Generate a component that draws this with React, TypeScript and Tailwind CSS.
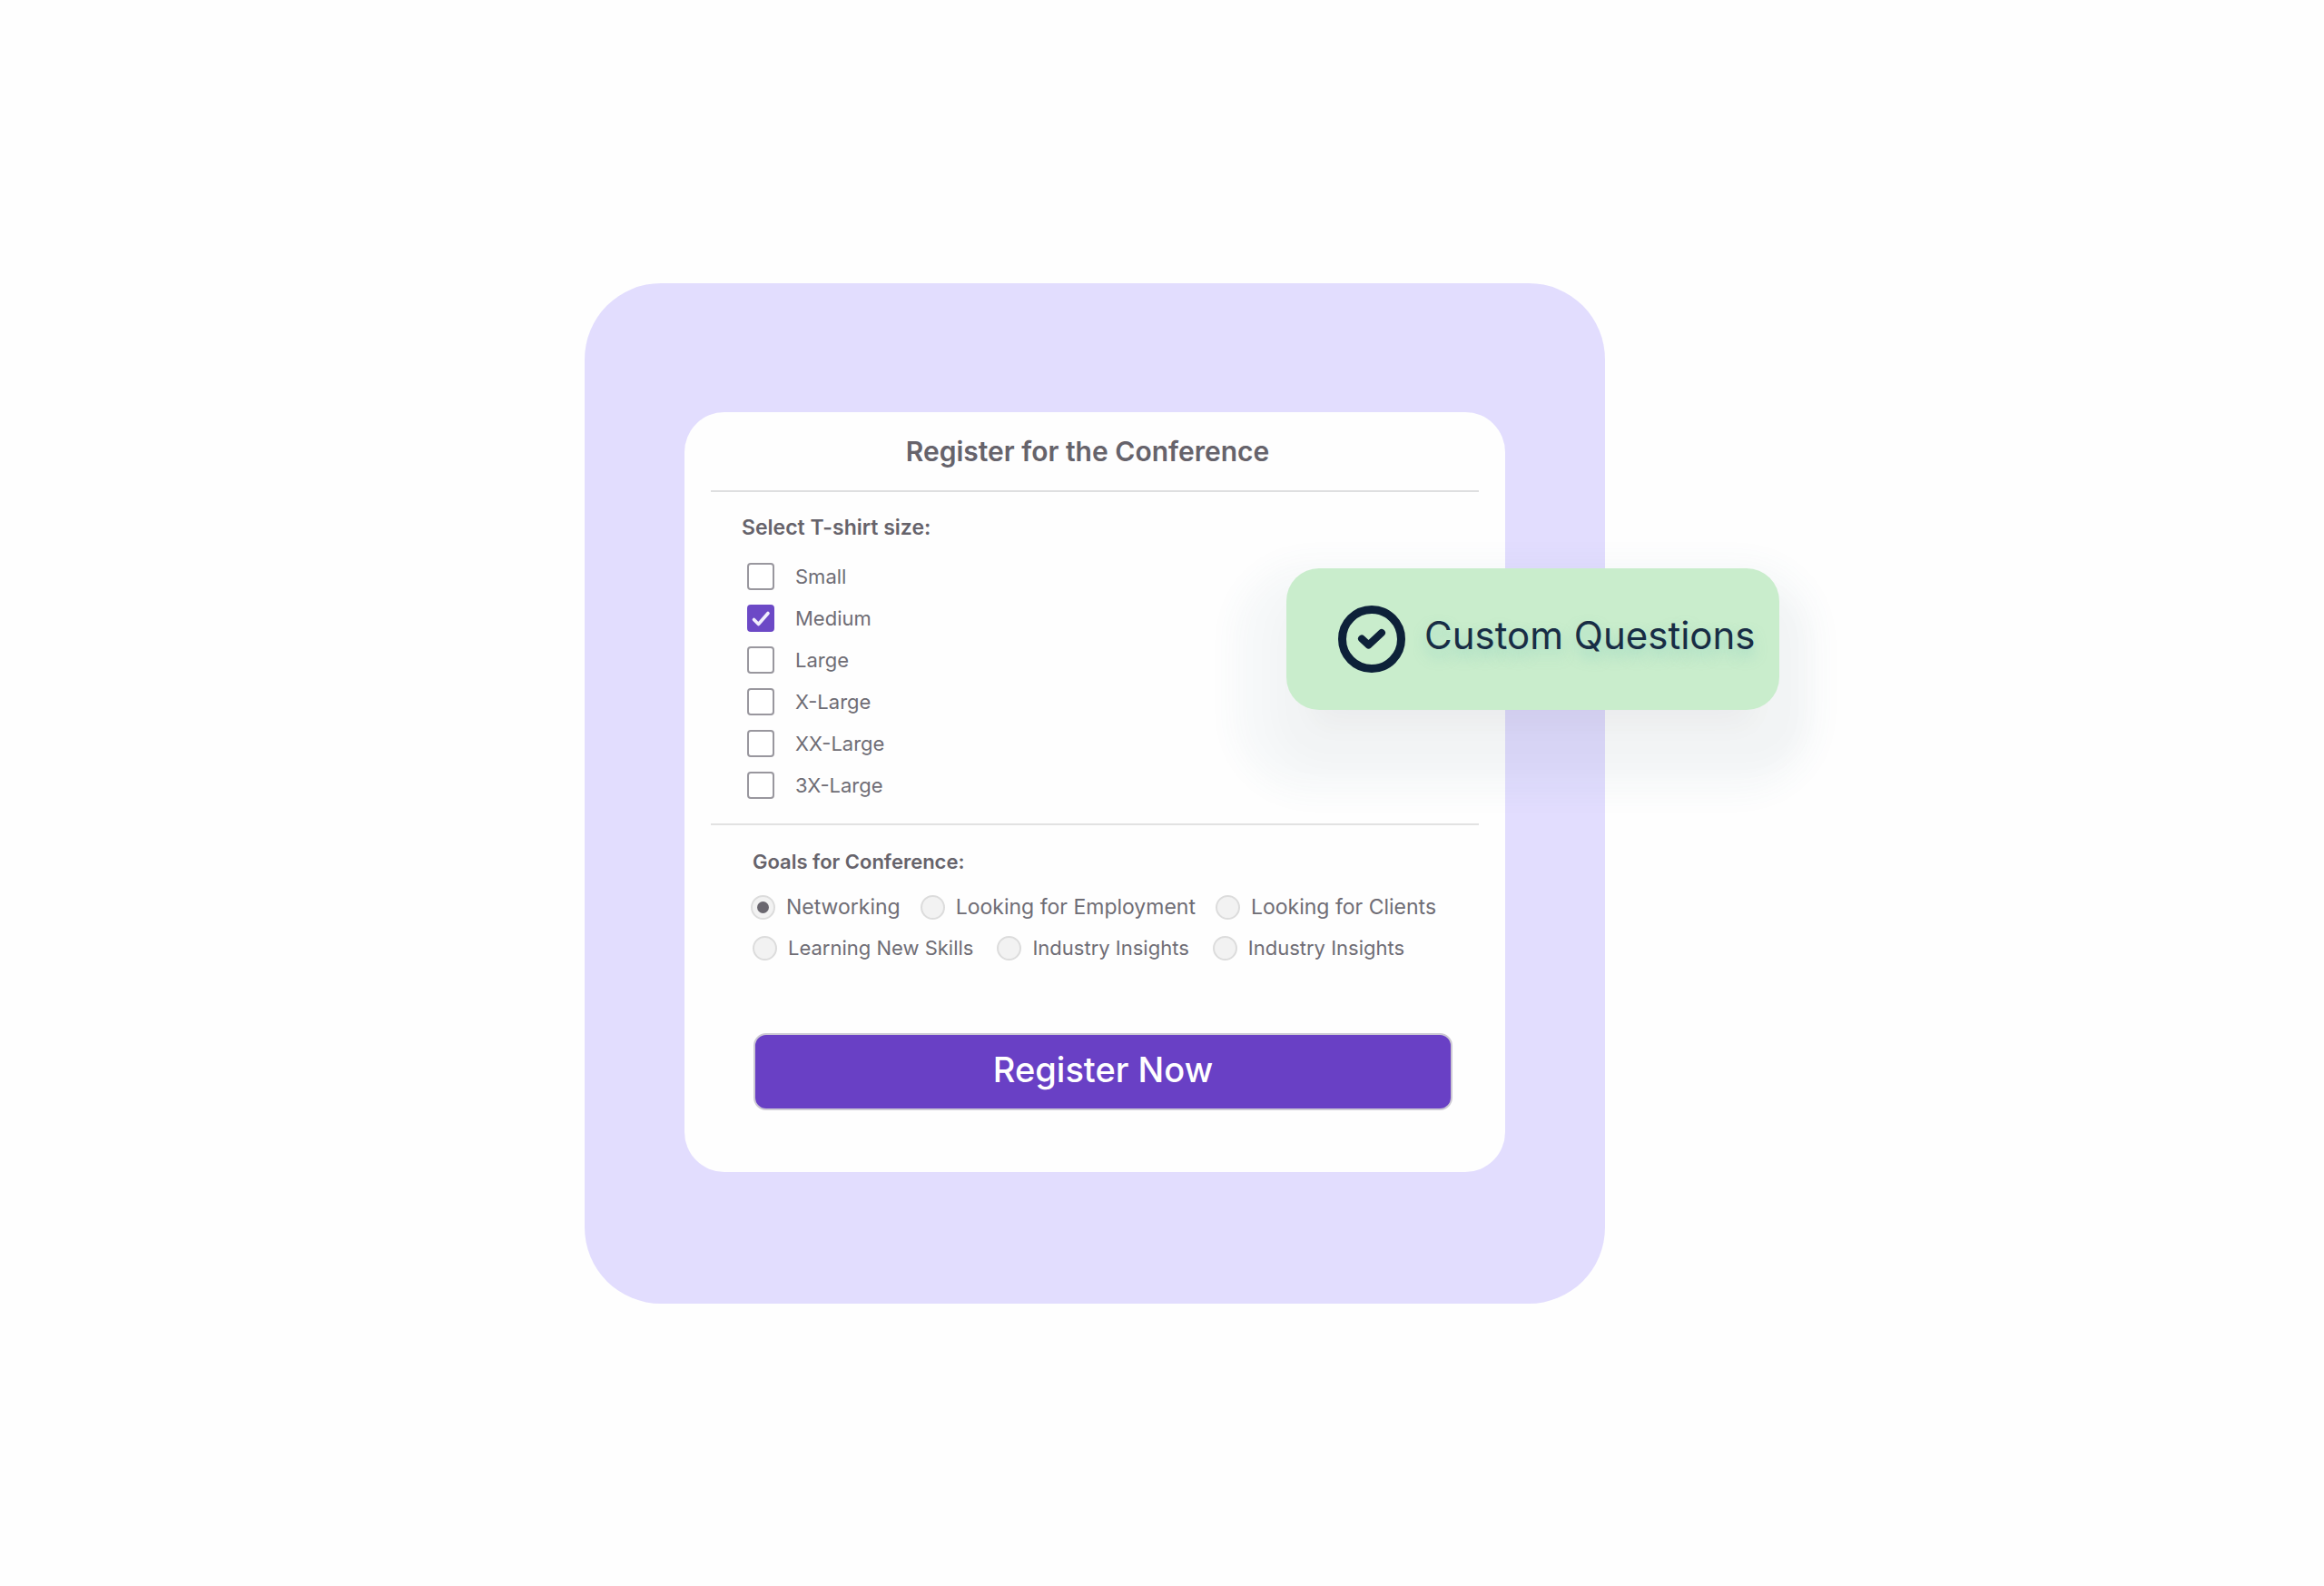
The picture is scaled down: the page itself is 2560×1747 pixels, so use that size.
import { useState } from "react";

const sizes = ["Small", "Medium", "Large", "X-Large", "XX-Large", "3X-Large"];

const primaryGoals = [
  { id: "networking", label: "Networking" },
  { id: "employment", label: "Looking for Employment" },
  { id: "clients", label: "Looking for Clients" },
];

const otherGoals = [
  { id: "skills", label: "Learning New Skills" },
  { id: "insights-1", label: "Industry Insights" },
  { id: "insights-2", label: "Industry Insights" },
];

function SizeOption({ label, checked, onToggle }: { label: string; checked: boolean; onToggle: () => void }) {
  return (
    <label className="flex h-[30px] items-center gap-[23px] text-[22px] leading-[30px] text-[#6f6d75]">
      <span className="relative size-[30px] shrink-0">
        <input
          type="checkbox"
          checked={checked}
          onChange={onToggle}
          className="block size-[30px] appearance-none rounded-[4px] border-2 border-[#99979e] bg-white checked:border-[#6c49c6] checked:bg-[#6c49c6]"
        />
        {checked && (
          <svg viewBox="0 0 30 30" className="pointer-events-none absolute inset-0 size-[30px]" fill="none" aria-hidden="true">
            <path d="M7.5 16.5 12.5 21.5 23 9.5" stroke="#f1effc" strokeWidth="3.6" strokeLinecap="round" strokeLinejoin="round" />
          </svg>
        )}
      </span>
      <span>{label}</span>
    </label>
  );
}

function GoalOption({ id, label, checked, onSelect }: { id: string; label: string; checked: boolean; onSelect: () => void }) {
  return (
    <label className="flex items-center gap-3 leading-[27px] whitespace-nowrap text-[#6f6d75]">
      <span className="relative grid size-[27px] shrink-0 place-items-center">
        <input
          type="radio"
          name="goal"
          value={id}
          checked={checked}
          onChange={onSelect}
          className="block size-[27px] appearance-none rounded-full border-2 border-[#dcdcdc] bg-[#f2f2f2]"
        />
        {checked && <span className="pointer-events-none absolute size-[13px] rounded-full bg-[#6a676f]" />}
      </span>
      <span>{label}</span>
    </label>
  );
}

function Badge() {
  return (
    <div className="absolute top-[314px] -right-[192px] flex h-[156px] w-[543px] items-center rounded-[36px] bg-[#c9edcc] pl-14 shadow-[0_46px_32px_-32px_rgba(40,20,80,0.04),6px_42px_32px_20px_rgba(60,30,20,0.02),-8px_42px_32px_50px_rgba(60,120,150,0.045)]">
      <svg viewBox="0 0 76 76" className="size-[76px] shrink-0" fill="none" stroke="#0d2139" aria-hidden="true">
        <circle cx="38" cy="38" r="32.5" strokeWidth="9" />
        <path d="M27 37.5 34.5 44.5 49 31" strokeWidth="8" strokeLinecap="round" strokeLinejoin="round" />
      </svg>
      <span className="ml-5 pb-2 text-[42px] leading-[48px] whitespace-nowrap text-[#182d45] [text-shadow:0_8px_14px_rgba(120,200,190,0.5)]">
        Custom Questions
      </span>
    </div>
  );
}

export default function App() {
  const [selected, setSelected] = useState<string[]>(["Medium"]);
  const [goal, setGoal] = useState("networking");

  const toggle = (size: string) =>
    setSelected((list) => (list.includes(size) ? list.filter((s) => s !== size) : [...list, size]));

  return (
    <main className="flex min-h-screen items-center justify-center overflow-hidden bg-[#fefefe] pr-[148px] font-['Inter',sans-serif]">
      <div className="relative w-full max-w-[1124px] rounded-[84px] bg-[#e2ddfe] px-[110px] pt-[142px] pb-[145px]">
        <form className="rounded-[44px] bg-[#fefefe] px-[29px] pb-[68px]" onSubmit={(e) => e.preventDefault()}>
          <h1 className="border-b-2 border-[#dedfe0] pt-[23px] pb-[23px] pr-4 text-center text-[30px] leading-[40px] font-semibold text-[#66636b]">
            Register for the Conference
          </h1>

          <fieldset className="border-b-2 border-[#e2e2e2] pb-[27px] pl-[34px]">
            <legend className="float-left w-full pt-[23px] text-[23px] leading-[32px] font-semibold text-[#66636b]">
              Select T-shirt size:
            </legend>
            <div className="clear-both flex flex-col items-start gap-4 pt-[23px] pl-[6px]">
              {sizes.map((size) => (
                <SizeOption key={size} label={size} checked={selected.includes(size)} onToggle={() => toggle(size)} />
              ))}
            </div>
          </fieldset>

          <fieldset className="pl-11">
            <legend className="float-left w-full pt-[24px] pl-[2px] text-[22px] leading-[32px] font-semibold text-[#66636b]">
              Goals for Conference:
            </legend>
            <div className="clear-both flex flex-col gap-[18px] pt-[21px]">
              <div className="flex gap-[22px] text-[23px]">
                {primaryGoals.map((g) => (
                  <GoalOption key={g.id} {...g} checked={goal === g.id} onSelect={() => setGoal(g.id)} />
                ))}
              </div>
              <div className="flex gap-[26px] pl-[2px] text-[22px]">
                {otherGoals.map((g) => (
                  <GoalOption key={g.id} {...g} checked={goal === g.id} onSelect={() => setGoal(g.id)} />
                ))}
              </div>
            </div>
          </fieldset>

          <div className="pt-20 pr-[29px] pl-[47px]">
            <button
              type="submit"
              className="block h-[85px] w-full rounded-[14px] border-2 border-[#cdc9d4] bg-[#6940c5] pb-1 text-[38px] leading-[48px] font-medium text-white"
            >
              Register Now
            </button>
          </div>
        </form>
        <Badge />
      </div>
    </main>
  );
}
